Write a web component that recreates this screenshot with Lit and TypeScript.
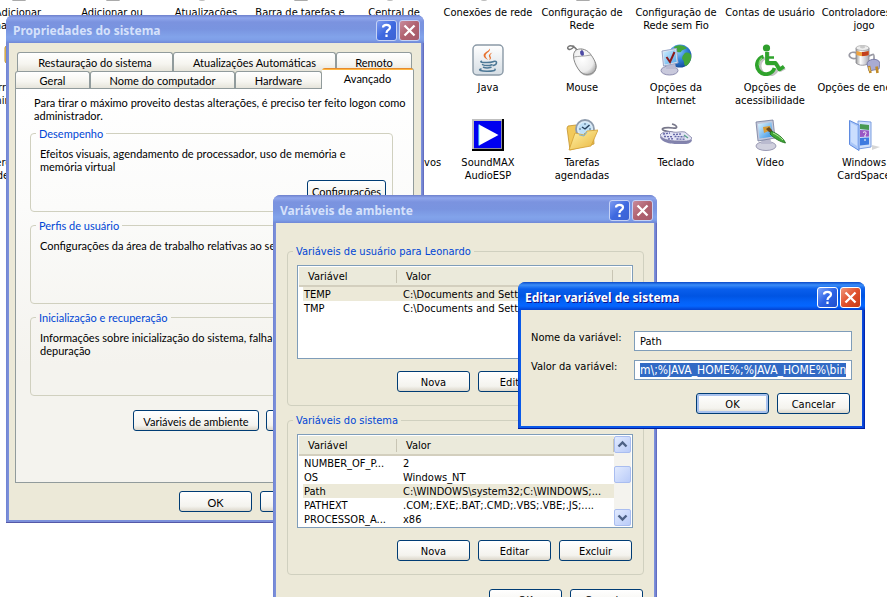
import { LitElement, html, svg, css, nothing, TemplateResult } from "lit";
import { customElement, property } from "lit/decorators.js";
import { classMap } from "lit/directives/class-map.js";

/* ---------- Control panel icons, 32 x 32 ---------- */

const icon = (body: unknown) => html`<svg class="icon" viewBox="0 0 32 32" aria-hidden="true">${body}</svg>`;

const javaIcon = icon(svg`
  <defs><linearGradient id="jv" x1="0" y1="0" x2="0" y2="1"><stop offset="0" stop-color="#fff"/><stop offset="1" stop-color="#d5dde4"/></linearGradient></defs>
  <rect x="1" y="1" width="30" height="30" rx="4" fill="url(#jv)" stroke="#8a99a6" stroke-width="1.4"/>
  <path d="M17.5 4.5c2 3-4.500 4.500-4 7.500.2 1.500 1.500 2.500 2.500 4-3-1.500-5-3.200-4.300-5.500.9-2.500 5.500-3.300 5.800-6z" fill="#e76f2b"/>
  <path d="M20.500 8.500c-2.500 1-4.200 2.500-3.500 4 .6 1.200 1.300 2 .2 3.800 2.300-1.500 2-2.800 1.200-4-.7-1.200.3-2.500 2.100-3.800z" fill="#e76f2b"/>
  <g fill="none" stroke="#4d7896" stroke-width="1.500" stroke-linecap="round">
    <path d="M9.500 17.200c-2 .8.500 1.400 5.500 1.300 2.300 0 4.500-.3 6-.8"/>
    <path d="M10.500 20.600c2.500 1.200 6.500 1.100 9.500.1M11.500 23.300c2 .9 5 .9 7.500 0"/>
    <path d="M21.500 17.500c4.200-1.200 4 3-.3 4"/>
    <path d="M9 25c-3.500 1 0 2.300 6.500 2.200 4.500 0 8.500-.7 7.500-2"/>
  </g>`);

const mouseIcon = icon(svg`
  <defs><radialGradient id="ms" cx=".4" cy=".4" r=".7"><stop offset="0" stop-color="#fff"/><stop offset=".7" stop-color="#ececec"/><stop offset="1" stop-color="#aaa"/></radialGradient></defs>
  <path d="M11 6C9 3 5 .5 2.500 2.500s1 4 3.500 2S9 1.500 5 2" fill="none" stroke="#777" stroke-width="1.500"/>
  <ellipse cx="21" cy="22" rx="10" ry="9.500" transform="rotate(48 21 22)" fill="#777" opacity=".55"/>
  <path d="M9 7c3.500-3.500 11-2.500 15 2.500 3.500 4.500 7.500 11 5.500 16-1.500 4.500-9 6.500-13.500 3.500C11 25.500 4.500 12.500 9 7z" fill="url(#ms)" stroke="#888" stroke-width="1"/>
  <path d="M7.800 13c4.500-1 10-.5 17.200-2M15.500 4.800l1.500 7" fill="none" stroke="#a5a5a5"/>
  <ellipse cx="16" cy="9" rx="1.900" ry="2.700" transform="rotate(-15 16 9)" fill="#4d4aa5"/>`);

const internetIcon = icon(svg`
  <defs>
    <radialGradient id="gl" cx=".4" cy=".3" r=".8"><stop offset="0" stop-color="#8fd0ff"/><stop offset=".5" stop-color="#2f7fd6"/><stop offset="1" stop-color="#123f8c"/></radialGradient>
    <linearGradient id="sc" x1="0" y1="0" x2="1" y2="1"><stop offset="0" stop-color="#d7f2ff"/><stop offset="1" stop-color="#4ba3e8"/></linearGradient>
  </defs>
  <circle cx="20" cy="12" r="11.500" fill="url(#gl)"/>
  <path d="M14 3c4-3 10-2 13 1-2 2-5 1-6 4-3 1-6 0-7-5zM25 9c3-1 5 0 6 2 1 5-2 9-5 11-3-1-1-4-3-6s0-5 2-7z" fill="#43a53a"/>
  <ellipse cx="9.500" cy="26.500" rx="8.500" ry="4.500" fill="#c9c9dc" stroke="#8d8db0"/>
  <path d="M7 20l8-2 1 7H6z" fill="#b9bad2"/>
  <path d="M2.500 7.500L16 5l1.500 13.500L4 21.500z" fill="url(#sc)" stroke="#dfe6f2" stroke-width="1.500"/>
  <path d="M2 7L16.500 4.500l1.500 14.500L3.500 22z" fill="none" stroke="#7d8db5" stroke-width=".7"/>
  <path d="M6.500 13l3.500 5 4.500-10" fill="none" stroke="#8c1a1a" stroke-width="2"/>`);

const accessIcon = icon(svg`
  <g transform="translate(1 1)" opacity=".3" fill="none" stroke="#333" stroke-width="3"><path d="M10 13a9 9 0 1 0 12.500 11M13 7v12h9l4 6 4-2"/></g>
  <circle cx="12.500" cy="4" r="3.600" fill="#2f9e2c"/>
  <path d="M9.500 12.500A9 9 0 1 0 20.500 24" fill="none" stroke="#2fa32c" stroke-width="3.800"/>
  <path d="M13 8v11h8.500l4 6.500 4.500-3" fill="none" stroke="#2fa32c" stroke-width="3.800" stroke-linejoin="round"/>
  <path d="M13.500 13.500h6.500" stroke="#2fa32c" stroke-width="2.500"/>
  <path d="M8 14a7.500 7.500 0 0 0-2.800 7" fill="none" stroke="#7fdc6c" stroke-width="1.200"/>`);

const powerIcon = icon(svg`
  <defs><linearGradient id="pw"><stop offset="0" stop-color="#999"/><stop offset=".35" stop-color="#fff"/><stop offset="1" stop-color="#a8a8b2"/></linearGradient></defs>
  <path d="M9 14C3 16 0 12 2 9.500s5-.5 6-1M21 12c6-3 5-2 5 4" fill="none" stroke="#9a9aa4" stroke-width="1.700"/>
  <path d="M8 4h13v15c-3 3-10 3-13 0z" fill="url(#pw)" stroke="#85858d" stroke-width=".8"/>
  <ellipse cx="14.500" cy="4" rx="6.500" ry="2.500" fill="#eee" stroke="#999" stroke-width=".6"/>
  <ellipse cx="14.500" cy="3" rx="2.600" ry="1.400" fill="#c9c9c9"/>
  <path d="M8.400 7c4 1.500 8 1.500 12.200 0v4c-4 1.500-8 1.500-12.200 0z" fill="#f0a23c"/>
  <path d="M14 8.100c3 0 4.500-.4 6.600-1.100v4c-2 .8-4 1.100-6.600 1.100z" fill="#c3401e"/>
  <path d="M19 20c0-5 11-7 13-1l-1 6-10 2z" fill="#a9abd2" stroke="#6c6e9c" stroke-width=".8"/>
  <path d="M21 22l1.500 7M28.500 22.500l1 6.500" stroke="#c08a28" stroke-width="2.600"/>
  <path d="M21 23l1 4" stroke="#f5d878"/>`);

const soundIcon = icon(svg`
  <rect width="32" height="32" fill="#000"/>
  <path d="M0 0h30v2H2v28H0z" fill="#bfbfbf"/>
  <rect x="2" y="2" width="27" height="27" fill="#0000f0"/>
  <path d="M29 2h1v28H2v-1h27z" fill="#8a8aa0"/>
  <path d="M7 5.500v21L26.500 16z" fill="#fff"/>
  <path d="M7 5.500v21" stroke="#7ff" stroke-width="1"/>`);

const tasksIcon = icon(svg`
  <defs><linearGradient id="fd" x1="0" y1="0" x2="1" y2="1"><stop offset="0" stop-color="#fff3a8"/><stop offset="1" stop-color="#e9b53c"/></linearGradient></defs>
  <path d="M1 9l1-2 8-1 2 2 15-1 1 18-24 6z" fill="#f2c95a" stroke="#c3922c" stroke-width=".8"/>
  <circle cx="19" cy="10" r="9" fill="#dcecf8" stroke="#8e9cad" stroke-width="1.800"/>
  <circle cx="19" cy="10" r="6.500" fill="#bfe0f7"/>
  <path d="M19 10l4.500-4M19 10l-3-2M19 4.500v1M19 14.500v1M13.500 10h1M23.500 10h1" stroke="#26405c" stroke-width="1.500"/>
  <path d="M3 31L9 14l9 2 3-4 11-1-7 16z" fill="url(#fd)" stroke="#d39f34" stroke-width=".8"/>
  <path d="M13 15.800l5 1.200 3-4" fill="none" stroke="#7fb3d4"/>`);

const keyboardIcon = icon(svg`
  <path d="M14 15c2-2-8-2-11-4s4-3 10-2 4-3-1-4" fill="none" stroke="#77778a" stroke-width="1.600"/>
  <path d="M0 18c3-4 9-4 13-3s8-1 12 0l7 6c-1 5-9 4-13 4S2 25 0 18z" fill="#8384ae"/>
  <path d="M0 16c3-4 9-4 13-3s8-1 12 0l7 6c-1 4-9 3-13 3S2 22 0 16z" fill="#e3e4f4" stroke="#7d7ea3" stroke-width=".8"/>
  <path d="M3 15l7-1M13 15.500l9-.5M4 17.500l8 .2M14.500 17.500l10 .3M8 20l6-.3M16.500 20l8 .2" stroke="#6668a8" stroke-width="1.400" stroke-dasharray="2 1"/>
  <path d="M24 16l4 3" stroke="#53a085" stroke-width="1.200"/>`);

const videoIcon = icon(svg`
  <defs><linearGradient id="vd" x1="0" y1="0" x2="1" y2="1"><stop offset="0" stop-color="#e1f6ff"/><stop offset="1" stop-color="#2f8de2"/></linearGradient></defs>
  <ellipse cx="12" cy="27" rx="10" ry="4.500" fill="#d0d0de" stroke="#9a9ab4"/>
  <path d="M8 20l8-1 2 6H7z" fill="#babacf"/>
  <path d="M2 3l17-2 2 18-17 3z" fill="#c3c9dc" stroke="#737b9a" stroke-width=".8"/>
  <path d="M4 5l13.500-1.700L19 17.500 5.500 19.500z" fill="url(#vd)"/>
  <path d="M9 8l7-1 1 4-7 3z" fill="#d99a33"/>
  <path d="M12 10l3 3 4 2-1-4-3-3z" fill="#6b4a1d"/>
  <path d="M17 12c5 2 12 6 14.500 12-5-1-12-5-15.500-9z" fill="#3fa535" stroke="#1c6b1a" stroke-width=".8"/>
  <path d="M19 14c4 2 7 4 10 7" stroke="#b5ef9c" fill="none"/>`);

const cardIcon = icon(svg`
  <path d="M24 26l8 2-8 3z" fill="#bbb" opacity=".6"/>
  <path d="M10 2l13 1v25l-13 2z" fill="#cfe0fb" stroke="#7d9fe0"/>
  <path d="M12 5l9 1v5l-9-1z" fill="#4a9a52"/><path d="M12 11l9 .5v6l-9 .5z" fill="#9a57c4"/><path d="M12 19l9-.5v7l-9 1z" fill="#3e7be0"/>
  <path d="M15 13.500c3-2 4 1 2 2.500v2M17 20v2" stroke="#fff" fill="none"/>
  <path d="M1.500 1.500L11 6v25.500l-9.500-6z" fill="#a9c6f8" stroke="#5f8be0"/>
  <path d="M3 4l6 3v20l-6-4z" fill="#d3e3ff" opacity=".8"/>`);

const folderIcon = icon(svg`
  <rect x="3" y="2" width="19" height="17" rx="2" fill="#f4cd62" stroke="#bf8f2c"/>
  <path d="M6 7h13v9H6z" fill="#fbe9a8" stroke="#bf8f2c"/>`);

const baseIcon = icon(svg`<ellipse cx="17" cy="31" rx="7" ry="2" fill="#aaa"/>`);
const slimIcon = icon(svg`<ellipse cx="12" cy="31" rx="3" ry="1" fill="#bbb"/>`);
const noIcon = icon(nothing);

const desktopItems: Array<[TemplateResult, string]> = [
  [baseIcon, "Adicionar\nhardware"], [baseIcon, "Adicionar ou\nremover programas"], [slimIcon, "Atualizações\nAutomáticas"],
  [baseIcon, "Barra de tarefas e\nmenu Iniciar"], [slimIcon, "Central de\nSegurança"], [slimIcon, "Conexões de rede"],
  [baseIcon, "Configuração de\nRede"], [noIcon, "Configuração de\nRede sem Fio"], [noIcon, "Contas de usuário"], [noIcon, "Controladores de\njogo"],
  [folderIcon, "Ferramentas\nadministrativas"], [noIcon, ""], [noIcon, ""], [noIcon, ""], [noIcon, ""],
  [javaIcon, "Java"], [mouseIcon, "Mouse"], [internetIcon, "Opções da\nInternet"], [accessIcon, "Opções de\nacessibilidade"], [powerIcon, "Opções de energia"],
  [noIcon, "Gerenciador\nde vídeo"], [noIcon, ""], [noIcon, ""], [noIcon, ""], [noIcon, "Sons e dispositivos\nde áudio"],
  [soundIcon, "SoundMAX\nAudioESP"], [tasksIcon, "Tarefas\nagendadas"], [keyboardIcon, "Teclado"], [videoIcon, "Vídeo"], [cardIcon, "Windows\nCardSpace"],
];

/* ---------- Window frame ---------- */

@customElement("xp-window")
export class XpWindow extends LitElement {
  @property() caption = "";
  @property({ type: Boolean, reflect: true }) active = false;

  static styles = css`
    :host {
      display: block;
      box-sizing: border-box;
      border-radius: 8px 8px 0 0;
      padding: 0 3px 3px;
      background: linear-gradient(90deg, #6f82d2, #7c90da 2px, #7c90da calc(100% - 2px), #5b63b8);
      box-shadow: inset 0 -1px #5558a8;
    }
    :host([active]) {
      background: linear-gradient(90deg, #0a3fd0, #0a5bea 2px, #0a4be0 calc(100% - 2px), #001c9c);
      box-shadow: inset 0 -1px #001c9c;
    }
    .bar {
      display: flex;
      align-items: center;
      gap: 2px;
      height: 28px;
      box-sizing: border-box;
      margin: 0 -3px;
      padding: 2px 4px 0 7px;
      border-radius: 7px 7px 0 0;
      background: linear-gradient(#6d80cc, #8fa6ec 3px, #7b93df 7px, #7994e0 14px, #82a3ea 22px, #7e9ee8 25px, #7088d6);
      color: #d5e1fb;
      font: bold 12px "Noto Sans", sans-serif;
    }
    :host([active]) .bar {
      background: linear-gradient(#0a49c8, #3b8df8 3px, #0a5fec 7px, #0054e3 14px, #0362f8 20px, #0466ff 24px, #0341cf);
      color: #fff;
      text-shadow: 1px 1px #0f1089;
    }
    h1 {
      flex: 1;
      min-width: 0;
      margin: 0;
      font: inherit;
      white-space: nowrap;
    }
    button {
      width: 21px;
      height: 21px;
      padding: 0;
      border: 1px solid #c5d2f6;
      border-radius: 3px;
      background: linear-gradient(135deg, #7d9bf0, #3e69e0 50%, #3c62d2);
    }
    .close {
      background: linear-gradient(135deg, #c98b9c, #b0626f 50%, #a55a6c);
    }
    :host([active]) button {
      border-color: #fff;
      background: linear-gradient(135deg, #7fa5fa, #2c62e6 50%, #2050cc);
    }
    :host([active]) .close {
      background: linear-gradient(135deg, #f0977b, #e0502c 50%, #c63a16);
    }
    svg {
      display: block;
      width: 19px;
      height: 19px;
      fill: none;
      stroke: #fff;
    }
    .body {
      background: #ece9d8;
    }
  `;

  render() {
    return html`
      <div class="bar">
        <h1>${this.caption}</h1>
        <button aria-label="Ajuda"><svg viewBox="0 0 19 19"><path d="M6 6.500C6 3 13 3 13 6.500c0 2.500-3.500 2.500-3.500 5.500M9.500 13.500V16" stroke-width="2.200"/></svg></button>
        <button class="close" aria-label="Fechar"><svg viewBox="0 0 19 19"><path d="M4.500 4.500l10 10M14.500 4.500l-10 10" stroke-width="2.300"/></svg></button>
      </div>
      <div class="body"><slot></slot></div>`;
  }
}

/* ---------- Desktop ---------- */

interface Variable { name: string; value: string; selected?: boolean }

const userVariables: Variable[] = [
  { name: "TEMP", value: "C:\\Documents and Settings\\Leonardo\\Configurações", selected: true },
  { name: "TMP", value: "C:\\Documents and Settings\\Leonardo\\Configurações" },
];

const systemVariables: Variable[] = [
  { name: "NUMBER_OF_P...", value: "2" },
  { name: "OS", value: "Windows_NT" },
  { name: "Path", value: "C:\\WINDOWS\\system32;C:\\WINDOWS;...", selected: true },
  { name: "PATHEXT", value: ".COM;.EXE;.BAT;.CMD;.VBS;.VBE;.JS;...." },
  { name: "PROCESSOR_A...", value: "x86" },
];

@customElement("app-root")
export class AppRoot extends LitElement {
  static styles = css`
    :host {
      display: block;
      position: relative;
      height: 100vh;
      overflow: hidden;
      background: #fff;
      color: #000;
      font: 11px/13px "DejaVu Sans Condensed", "DejaVu Sans", sans-serif;
    }
    .icons {
      display: grid;
      grid-template-columns: repeat(10, 94px);
      grid-auto-rows: 75px;
      margin: -31px 0 0 -29px;
    }
    .item {
      display: flex;
      flex-direction: column;
      align-items: center;
      gap: 5px;
      text-align: center;
      white-space: pre;
    }
    .icon {
      flex: none;
      width: 32px;
      height: 32px;
    }
    xp-window {
      position: absolute;
    }
    .properties {
      left: 6px;
      top: 15px;
      width: 418px;
      font-family: Lato, "Liberation Sans", sans-serif;
    }
    .environment {
      left: 273px;
      top: 195px;
      width: 384px;
    }
    .edit {
      left: 518px;
      top: 282px;
      width: 347px;
    }

    button.push {
      box-sizing: border-box;
      min-width: 73px;
      height: 21px;
      padding: 1px 8px 0;
      border: 1px solid #003c74;
      border-radius: 3px;
      background: linear-gradient(#fff, #f4f3ee 75%, #dcd7cb);
      color: inherit;
      font: inherit;
      white-space: nowrap;
    }
    button.default {
      box-shadow: inset 0 0 0 2px #a9c2ee;
    }
    .actions {
      display: flex;
      justify-content: flex-end;
      gap: 8px;
    }
    fieldset {
      min-width: 0;
      margin: 0;
      padding: 7px 6px 10px 9px;
      border: 1px solid #d0d0bf;
      border-radius: 4px;
    }
    legend {
      margin-left: -4px;
      padding: 0 3px;
      color: #0046d5;
    }
    p {
      margin: 0;
      white-space: pre;
    }

    .sheet {
      padding: 9px 7px 8px 6px;
    }
    .tabs {
      display: grid;
    }
    .back {
      grid-template-columns: 156fr 163fr 76fr;
      margin: 0 2px;
    }
    .front {
      grid-template-columns: 75fr 145fr 87fr 92fr;
    }
    .tab {
      height: 19px;
      margin: 0;
      padding: 0;
      border: 1px solid #919b9c;
      border-bottom: 0;
      border-radius: 3px 3px 0 0;
      background: linear-gradient(#fff, #f6f5f0 60%, #e6e4da);
      color: inherit;
      font: inherit;
    }
    .front .tab {
      height: 17px;
    }
    .front .selected {
      height: 21px;
      margin: -3px 0 -1px;
      border-width: 0 1px 0 0;
      background: linear-gradient(#e68b2c 1px, #ffb640 1px, #ffb640 2px, #fff 2px);
      z-index: 1;
    }
    .panel {
      padding: 7px 20px 51px 14px;
      border: 1px solid #919b9c;
      background: linear-gradient(#fff, #fbfbfa 30%, #f4f3ee 70%);
    }
    .intro {
      margin: 0 0 5px 4px;
    }
    .group {
      display: flex;
      flex-direction: column;
      gap: 7px;
    }
    .group p {
      min-height: 26px;
    }
    .group button {
      align-self: flex-end;
      width: 79px;
      padding: 1px 0 0;
    }
    .area {
      margin-bottom: 7px;
    }
    .panel .actions {
      margin-top: 14px;
      margin-right: 7px;
      gap: 7px;
    }
    .wide {
      width: 126px;
    }
    .reports {
      width: 120px;
    }
    .sheet > .actions {
      margin-top: 8px;
    }

    .lists {
      padding: 22px 10px 12px 11px;
      display: flex;
      flex-direction: column;
      gap: 8px;
    }
    .variables {
      padding: 7px 10px 13px 9px;
    }
    .variables .actions {
      margin-top: 12px;
      margin-right: 1px;
    }
    .lists > .actions {
      margin-top: 6px;
      margin-right: 1px;
    }
    .list {
      display: flex;
      box-sizing: border-box;
      height: 94px;
      padding: 1px;
      overflow: hidden;
      border: 1px solid #7f9db9;
      background: #fff;
    }
    .viewport {
      flex: 1;
      min-width: 0;
    }
    table {
      width: 100%;
      table-layout: fixed;
      border-collapse: separate;
      border-spacing: 0;
    }
    th {
      box-sizing: border-box;
      height: 20px;
      padding: 1px 9px 0;
      border-bottom: 2px solid #d3cfbe;
      background: linear-gradient(90deg, #c8c5b4, #c8c5b4) right 3px / 1px 13px no-repeat, #ebeadb;
      font-weight: normal;
      text-align: left;
    }
    .name {
      width: 98px;
    }
    .rest {
      width: 18px;
      background: #ebeadb;
    }
    td {
      height: 14px;
      padding: 1px 1px 0;
      overflow: hidden;
      box-sizing: border-box;
      line-height: 13px;
      text-overflow: ellipsis;
      white-space: nowrap;
    }
    td:first-child {
      border-left: 4px solid #fff;
    }
    td:nth-child(2) {
      padding-left: 6px;
    }
    .current td {
      background: #ece9d8;
      background-clip: padding-box;
    }
    .scroll {
      display: flex;
      flex-direction: column;
      width: 17px;
      background: #f4f3ee;
    }
    .scroll button,
    .thumb {
      box-sizing: border-box;
      width: 17px;
      height: 17px;
      padding: 0;
      border: 1px solid #a9bdf0;
      border-radius: 2px;
      background: linear-gradient(135deg, #e1eafe, #b9cbf8);
    }
    .thumb {
      margin: 13px 0 auto;
    }
    .scroll svg {
      display: block;
      width: 15px;
      height: 15px;
      fill: none;
      stroke: #4d6185;
      stroke-width: 2.4;
    }

    form {
      display: grid;
      grid-template-columns: 103px 1fr;
      align-items: start;
      row-gap: 9px;
      padding: 21px 10px 12px;
    }
    input {
      box-sizing: border-box;
      width: 100%;
      height: 20px;
      margin: 0;
      padding: 2px 5px;
      border: 1px solid #7f9db9;
      border-radius: 0;
      outline: none;
      background: #fff;
      color: inherit;
      font: inherit;
    }
    .marked {
      background: linear-gradient(#316ac5, #316ac5) content-box, #fff;
      color: #fff;
      font-size: 12px;
    }
    form .actions {
      grid-column: 1 / -1;
      margin: 4px 2px 0 0;
    }
  `;

  private area(title: string, text: string) {
    return html`
      <fieldset class="area">
        <legend>${title}</legend>
        <div class="group">
          <p>${text}</p>
          <button class="push">Configurações</button>
        </div>
      </fieldset>`;
  }

  private variables(title: string, rows: Variable[], scrollable: boolean) {
    return html`
      <fieldset class="variables">
        <legend>${title}</legend>
        <div class="list">
          <div class="viewport">
            <table>
              <thead>
                <tr>
                  <th class="name">Variável</th>
                  <th>Valor</th>
                  ${scrollable ? nothing : html`<th class="rest"></th>`}
                </tr>
              </thead>
              <tbody>
                ${rows.map((row) => html`
                  <tr class=${classMap({ current: !!row.selected })}>
                    <td>${row.name}</td>
                    <td>${row.value}</td>
                    ${scrollable ? nothing : html`<td></td>`}
                  </tr>`)}
              </tbody>
            </table>
          </div>
          ${scrollable ? html`
            <div class="scroll">
              <button aria-label="Rolar para cima"><svg viewBox="0 0 15 15"><path d="M3.500 9.500l4-4 4 4"/></svg></button>
              <div class="thumb"></div>
              <button aria-label="Rolar para baixo"><svg viewBox="0 0 15 15"><path d="M3.500 5.500l4 4 4-4"/></svg></button>
            </div>` : nothing}
        </div>
        <div class="actions">
          <button class="push">Nova</button>
          <button class="push">Editar</button>
          <button class="push">Excluir</button>
        </div>
      </fieldset>`;
  }

  render() {
    return html`
      <div class="icons">
        ${desktopItems.map(([picture, label]) => html`<div class="item">${picture}<span>${label}</span></div>`)}
      </div>

      <xp-window class="properties" caption="Propriedades do sistema">
        <div class="sheet">
          <div class="tabs back">
            <button class="tab">Restauração do sistema</button>
            <button class="tab">Atualizações Automáticas</button>
            <button class="tab">Remoto</button>
          </div>
          <div class="tabs front">
            <button class="tab">Geral</button>
            <button class="tab">Nome do computador</button>
            <button class="tab">Hardware</button>
            <button class="tab selected">Avançado</button>
          </div>
          <div class="panel">
            <p class="intro">${"Para tirar o máximo proveito destas alterações, é preciso ter feito logon como\nadministrador."}</p>
            ${this.area("Desempenho", "Efeitos visuais, agendamento de processador, uso de memória e\nmemória virtual")}
            ${this.area("Perfis de usuário", "Configurações da área de trabalho relativas ao seu logon")}
            ${this.area("Inicialização e recuperação", "Informações sobre inicialização do sistema, falha do sistema e\ndepuração")}
            <div class="actions">
              <button class="push wide">Variáveis de ambiente</button>
              <button class="push reports">Relatório de erros</button>
            </div>
          </div>
          <div class="actions">
            <button class="push">OK</button>
            <button class="push">Cancelar</button>
            <button class="push">Aplicar</button>
          </div>
        </div>
      </xp-window>

      <xp-window class="environment" caption="Variáveis de ambiente">
        <div class="lists">
          ${this.variables("Variáveis de usuário para Leonardo", userVariables, false)}
          ${this.variables("Variáveis do sistema", systemVariables, true)}
          <div class="actions">
            <button class="push">OK</button>
            <button class="push">Cancelar</button>
          </div>
        </div>
      </xp-window>

      <xp-window class="edit" caption="Editar variável de sistema" active>
        <form @submit=${(e: Event) => e.preventDefault()}>
          <label for="name">Nome da variável:</label>
          <input id="name" value="Path" />
          <label for="value">Valor da variável:</label>
          <input id="value" class="marked" value="m\\;%JAVA_HOME%;%JAVA_HOME%\\bin" />
          <div class="actions">
            <button class="push default">OK</button>
            <button class="push" type="button">Cancelar</button>
          </div>
        </form>
      </xp-window>`;
  }
}
